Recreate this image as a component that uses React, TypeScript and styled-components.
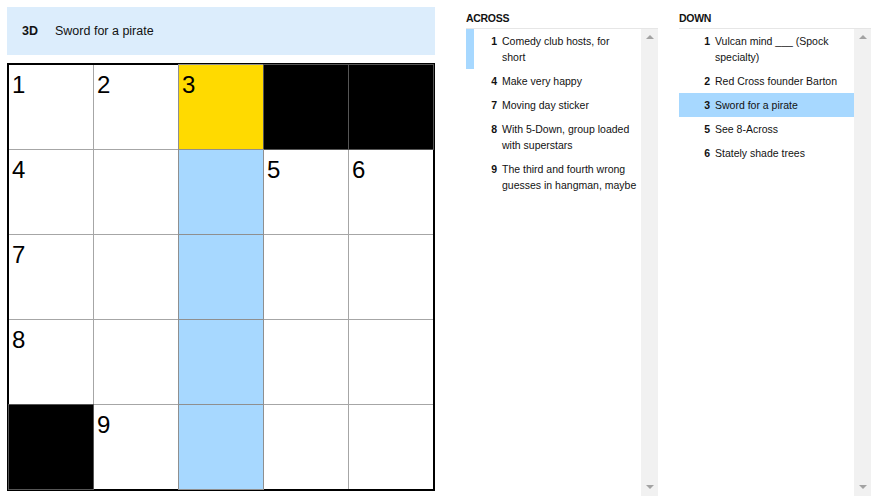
import React from "react";
import styled, { createGlobalStyle } from "styled-components";

const Global = createGlobalStyle`
  html, body { margin: 0; padding: 0; background: #fff; }
  body { font-family: "Liberation Sans", Arial, sans-serif; color: #121212; }
`;

const Page = styled.div`
  display: flex;
  align-items: flex-start;
  padding: 0 0 0 7px;
  width: 877px;
  height: 503px;
  box-sizing: border-box;
`;

const Board = styled.div`
  display: flex;
  flex-direction: column;
  gap: 8px;
  padding-top: 7px;
  width: 428px;
`;

const ClueBar = styled.div`
  display: flex;
  align-items: center;
  height: 48px;
  background: #dcedfc;
  padding-left: 15px;
  font-size: 12.5px;
`;

const ClueBarLabel = styled.span`
  font-weight: 700;
  width: 33px;
`;

const Grid = styled.div`
  display: grid;
  grid-template-columns: repeat(5, 84px);
  grid-template-rows: repeat(5, 84px);
  gap: 1px;
  background: #a6a6a6;
  border: 2px solid #000;
`;

type CellKind = "white" | "black" | "yellow" | "blue";

const cellColors: Record<CellKind, string> = {
  white: "#fff",
  black: "#000",
  yellow: "#ffda00",
  blue: "#a7d8ff",
};

const cellEdges: Record<CellKind, string> = {
  white: "none",
  black: "0 0 0 1px #555",
  yellow: "0 0 0 1px #8f8f8f",
  blue: "0 0 0 1px #8f8f8f",
};

const Cell = styled.div<{ $kind: CellKind }>`
  background: ${(p) => cellColors[p.$kind]};
  box-shadow: ${(p) => cellEdges[p.$kind]};
  z-index: ${(p) => (p.$kind === "white" ? 0 : 1)};
  font-size: 24px;
  line-height: 1;
  padding: 8px 0 0 3px;
  box-sizing: border-box;
  color: #000;
`;

const Lists = styled.div`
  display: flex;
  gap: 21px;
  margin-left: 31px;
`;

const Column = styled.div`
  display: flex;
  flex-direction: column;
  width: 192px;
`;

const Header = styled.div`
  height: 29px;
  box-sizing: border-box;
  padding-top: 12px;
  font-size: 10.5px;
  font-weight: 700;
  letter-spacing: -0.3px;
  border-bottom: 1px solid #e6e6e6;
`;

const ListBox = styled.div`
  display: flex;
  height: 467px;
`;

const List = styled.ul`
  list-style: none;
  margin: 0;
  padding: 0;
  flex: 1;
`;

const Row = styled.li<{ $active?: boolean; $marked?: boolean }>`
  display: grid;
  grid-template-columns: 31px 136px;
  column-gap: 5px;
  padding: 4px 0;
  font-size: 10.5px;
  line-height: 16px;
  background: ${(p) => (p.$active ? "#a7d8ff" : "transparent")};
  box-shadow: ${(p) => (p.$marked ? "inset 8px 0 0 #a7d8ff" : "none")};
`;

const Num = styled.span`
  font-weight: 700;
  text-align: right;
`;

const ClueText = styled.span`
  white-space: pre-line;
`;

const Scrollbar = styled.div`
  width: 17px;
  background: #f1f1f1;
  display: flex;
  flex-direction: column;
  justify-content: space-between;
  align-items: center;
  padding: 6px 0 7px;
  box-sizing: border-box;
`;

const Arrow = styled.div<{ $down?: boolean }>`
  width: 0;
  height: 0;
  border-left: 4px solid transparent;
  border-right: 4px solid transparent;
  ${(p) => (p.$down ? "border-top: 4px solid #a3a3a3;" : "border-bottom: 4px solid #a3a3a3;")}
`;

const grid: { kind: CellKind; n?: number }[][] = [
  [{ kind: "white", n: 1 }, { kind: "white", n: 2 }, { kind: "yellow", n: 3 }, { kind: "black" }, { kind: "black" }],
  [{ kind: "white", n: 4 }, { kind: "white" }, { kind: "blue" }, { kind: "white", n: 5 }, { kind: "white", n: 6 }],
  [{ kind: "white", n: 7 }, { kind: "white" }, { kind: "blue" }, { kind: "white" }, { kind: "white" }],
  [{ kind: "white", n: 8 }, { kind: "white" }, { kind: "blue" }, { kind: "white" }, { kind: "white" }],
  [{ kind: "black" }, { kind: "white", n: 9 }, { kind: "blue" }, { kind: "white" }, { kind: "white" }],
];

const across = [
  { n: 1, t: "Comedy club hosts, for\nshort", marked: true },
  { n: 4, t: "Make very happy" },
  { n: 7, t: "Moving day sticker" },
  { n: 8, t: "With 5-Down, group loaded with superstars" },
  { n: 9, t: "The third and fourth wrong guesses in hangman, maybe" },
];

const down = [
  { n: 1, t: "Vulcan mind ___ (Spock specialty)" },
  { n: 2, t: "Red Cross founder Barton" },
  { n: 3, t: "Sword for a pirate", active: true },
  { n: 5, t: "See 8-Across" },
  { n: 6, t: "Stately shade trees" },
];

type Clue = { n: number; t: string; marked?: boolean; active?: boolean };

function ClueColumn({ title, clues }: { title: string; clues: Clue[] }) {
  return (
    <Column>
      <Header>{title}</Header>
      <ListBox>
        <List>
          {clues.map((c) => (
            <Row key={c.n} $active={c.active} $marked={c.marked}>
              <Num>{c.n}</Num>
              <ClueText>{c.t}</ClueText>
            </Row>
          ))}
        </List>
        <Scrollbar>
          <Arrow />
          <Arrow $down />
        </Scrollbar>
      </ListBox>
    </Column>
  );
}

export default function App() {
  return (
    <>
      <Global />
      <Page>
        <Board>
          <ClueBar>
            <ClueBarLabel>3D</ClueBarLabel>
            <span>Sword for a pirate</span>
          </ClueBar>
          <Grid>
            {grid.flat().map((c, i) => (
              <Cell key={i} $kind={c.kind}>
                {c.n ?? ""}
              </Cell>
            ))}
          </Grid>
        </Board>
        <Lists>
          <ClueColumn title="ACROSS" clues={across} />
          <ClueColumn title="DOWN" clues={down} />
        </Lists>
      </Page>
    </>
  );
}
